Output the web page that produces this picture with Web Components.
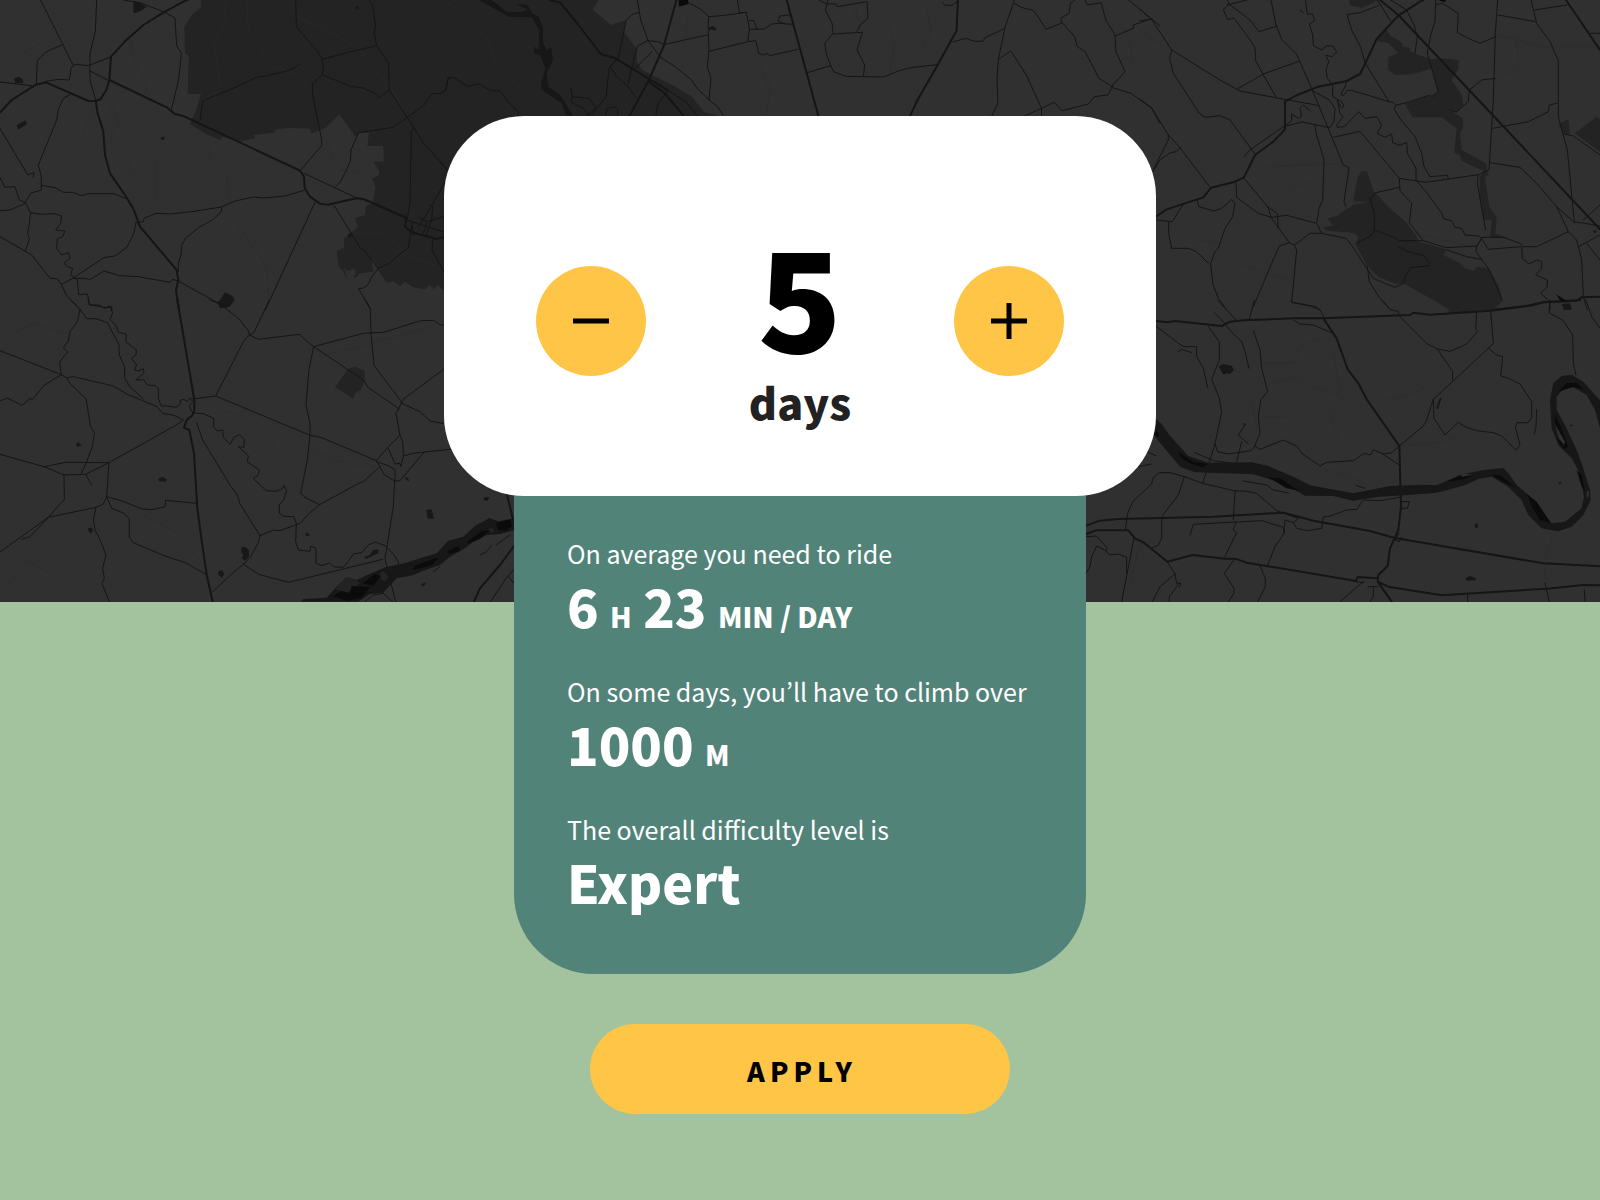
<!DOCTYPE html>
<html lang="en">
<head>
<meta charset="utf-8">
<meta name="viewport" content="width=device-width, initial-scale=1">
<title>Trip length</title>
<style>
  body {
    margin: 0;
    background: #a3c39e;
    font-family: "Noto Sans CJK KR", "Noto Sans", sans-serif;
  }
</style>
</head>
<body>
<trip-planner>
  <dark-map slot="map"></dark-map>
  <day-stepper value="5"></day-stepper>
  <trip-summary>
    <trip-stat label="On average you need to ride"><b>6</b> <small>H</small> <b>23</b> <small>MIN / DAY</small></trip-stat>
    <trip-stat label="On some days, you’ll have to climb over"><b>1000</b> <small>M</small></trip-stat>
    <trip-stat label="The overall difficulty level is"><b>Expert</b></trip-stat>
  </trip-summary>
  <apply-button>APPLY</apply-button>
</trip-planner>

<template id="map-template">
  <style>
    :host { display: block; height: 602px; overflow: hidden; background: #303030; }
    svg { display: block; width: 100%; height: 100%; }
    path { fill: none; stroke-linejoin: round; stroke-linecap: round; vector-effect: non-scaling-stroke; }
    .road { stroke: #151515; stroke-width: 1px; }
    .main { stroke: #151515; stroke-width: 2px; }
    .faint { stroke: #2c2c2c; stroke-width: 1px; opacity: .6; }
    .wood { fill: #232323; }
    .land { fill: #303030; }
    .lake { fill: #181818; }
    .deep { fill: #0b0b0b; }
    .river { fill: #171717; }
  </style>
  <svg viewBox="0 0 1600 602" preserveAspectRatio="xMidYMin slice" aria-hidden="true">
    <!-- north west -->
    <g transform="scale(.33333)">
      <path class="wood" d="M603 0V22L575 45 553 82 555 160 566 167 563 282H603L590 325 570 372 620 403 662 421 665 410 720 424 765 415 762 405 820 398 830 388 865 384 930 386 935 400 975 385 1018 343 1068 412 1075 398H1107L1102 438H1150L1152 485H1122L1138 515 1135 528 1115 535 1127 560 1118 610 1098 618 1095 645 1065 655 1074 680 1048 705 1032 715 1032 745 1010 752 1016 800 1028 812 1042 838 1032 803 1066 835 1080 820 1120 815 1114 780 1160 848 1180 843 1200 858 1215 845 1240 862 1275 868 1290 855 1300 868 1315 855 1325 868 1500 870 2154 600V348L2112 336 2076 290 2016 255 1926 210 1911 186 1908 144 1872 96 1878 60 1833 75 1779 30 1795 0Z"/>
      <path class="land" d="M1040 815L1062 805 1068 822 1055 832ZM1113 785L1120 780 1134 805 1127 808Z"/>
      <path class="faint" d="M385 105L400 160 440 270 460 310M330 310L355 370 330 420 380 470 410 540M470 475V600M630 440V480L680 520 685 600M690 640L730 700 800 800 805 900M970 410L1020 510 1080 520M670 0L680 60 640 130 660 250 640 300M740 0L745 90 780 140 820 200 880 220 960 300M890 50L1000 100 1080 150 1160 250 1220 340M1060 700L1150 700 1230 770 1300 795M250 400L280 330M40 180L120 130"/>
      <path class="road" d="M122 0L187 130 220 197 213 205 208 240 175 238 138 244M187 134L137 156 112 182 109 250M290 0L286 95 270 160V240L287 300M220 197L228 193 265 197 332 171M268 212L326 242M370 0L420 8 495 37 525 54 530 137 544 160 536 240 526 280 514 330M0 246L95 257M0 386L83 524 102 518 100 532M208 285L190 295 176 325 170 360 115 495 124 530V570L92 580 76 608M0 532L15 562 45 560 58 600 76 608 92 638 88 670 83 700 88 718 76 752M0 632L30 630 76 610M124 556L165 563 190 577 218 577 245 587 265 581 340 581 376 595M92 638L125 643 165 641 184 648 182 670 167 690 195 693 188 710 172 715 170 745 185 765 205 758 210 775 192 790 202 800 218 805 212 825 232 840 236 884 262 882 270 915 300 915 312 925 335 920 336 930M0 710L95 765 150 835 172 836 184 853 200 888 243 930M184 853L218 835 312 773 345 768 380 742 400 705 408 668M220 835L258 835 268 840 312 813 358 827 415 830 510 847 518 838 534 843M408 668L430 665 432 655 468 640 512 642 575 635 665 621 702 604 760 591 790 594 855 588 912 571M665 621L664 635 640 658 596 683 557 714 545 736 543 765 535 790V815M534 843L660 912M945 607L796 930M1002 616L1080 742 1100 760 1134 806 1112 835 1107 850 1092 864 1076 866 1112 930M1134 806L1168 790 1225 742 1235 680M600 360L608 303 720 256 772 231 800 228 870 210 899 193M887 0L889 80 957 160 967 180 970 208 965 225 937 252 938 285 965 420V437L902 510M967 178L1040 158 1130 137 1123 100 1126 75 1118 15 1108 0M1130 137L1166 190 1168 270 1240 380 1270 430 1345 510M968 225L1055 260 1090 264 1133 285 1134 296 1168 270M1345 235L1338 270 1320 281H1295L1270 318 1180 382 1076 398 1053 450 1051 485 1022 545 1007 560M1240 380L1234 395 1230 610 1222 655M912 520L1070 594M1345 530L1278 645 1255 680M1290 615L1298 620 1295 660 1278 705M1215 657L1235 665 1345 700M1235 665L1240 705M1345 645L1285 665M1298 715L1296 750 1345 840M1260 655L1282 665 1270 700"/>
      <path class="main" d="M0 338L35 300 108 254 138 247 265 303H288L302 297 320 268 328 240 333 170 375 124 430 75 490 38 550 5 563 0M328 240L500 322 524 342 553 349 900 512 912 530 914 565 930 590 960 611 984 614 1015 607 1070 595 1090 597 1220 654 1215 680 1235 697 1310 717 1345 708M288 308L293 340 310 395 315 465 330 520 375 585 400 626 420 680 530 810 535 840 528 870 537 930"/>
      <path class="lake" d="M400 2L412 5 441 20 422 33 401 40ZM42 236L56 230 68 238 70 250 46 250ZM50 375L77 361 81 373 54 389ZM653 910L675 877 698 888 704 901 688 920 660 925ZM482 412L492 410 494 417 485 421ZM1065 20L1076 18 1076 26 1068 28ZM1042 705L1052 697 1058 708 1046 713Z"/>
    </g>
    <!-- south west -->
    <g transform="translate(0 300) scale(.33333)">
      <path class="wood" d="M1005 262L1043 208 1065 200 1094 212V243L1082 270 1066 278 1060 296Z"/>
      <path class="faint" d="M0 120L100 70 200 100M320 180L420 300M650 320L760 370 860 480M960 170L1150 120 1290 80M900 430L1000 480 1100 500M20 860L80 780 150 820M420 640L520 690 600 780M1220 640L1300 720"/>
      <path class="road" d="M212 0L240 28 260 56H288L322 68 357 134 358 165 374 200V235L392 262 432 298M240 28L232 65 210 95 205 123 190 143 203 156 179 186 184 224M0 152L184 224 132 256 99 297 90 296 66 316 22 294 0 303M184 224L199 233 220 230 340 258 380 282 471 320 488 340 522 346 550 360 534 372 327 488 257 523 275 556M199 233L212 253 258 296 272 380 283 398 278 437 260 485 244 520M264 0L268 14 300 20 318 23 328 18 338 38 330 58 350 80 355 97 378 102V125L409 150 408 165 394 176 410 195 403 210 415 213 430 206 432 218 408 240 430 239 442 255 465 257 475 265V295L484 318 500 318 528 322 540 313 542 300 552 298 562 305 570 293 578 305 568 318 575 335 590 340 610 341 642 355 640 380 652 393 668 390 670 412 690 433 702 412 718 404 733 418 732 442 715 440 745 467 742 485 778 510 775 525 760 535 785 560 800 572 828 574 846 567 852 556 860 572 852 598 838 615V640L852 649 882 650 889 670 887 725 895 750 930 754 932 738 948 745V790L966 797 988 788 1000 800 1030 802 1048 780 1060 762 1085 758 1105 735 1125 726 1155 737 1180 762 1195 785V795M628 0L660 12 715 55 745 92 748 105 775 118 898 103 922 125 941 140 927 208 918 315 930 370V405L922 480 902 580 915 592 957 613M808 0L762 97 745 108 730 125 647 288 578 297M647 288L930 406 965 413 1129 482 1165 440 1200 406 1188 340 1195 325 1130 280 1105 263 1090 240 941 140 1090 100 1150 97 1262 62 1300 61 1320 74 1332 76M1097 0L1111 25 1113 100 1122 196 1205 306 1195 330M1332 207L1212 296 1205 310 1260 335 1290 363 1332 371M1200 406L1208 425 1210 468 1240 460 1273 456 1360 447M1273 456L1210 530 1200 542 1184 543 1153 524 1129 482M1165 445L1185 492 1200 490 1203 500 1210 468M1129 485L1165 497 1186 510 1180 620 1155 775 1165 820 1187 905M1140 500L1090 545 1078 549 957 615 928 640 900 670 840 692 820 690 780 707 775 728 752 770 730 793 700 817 638 875M730 793L776 823 865 847 1148 778M590 368L608 420 690 555 712 585 720 612 780 707M0 463L132 500 192 525 257 523M132 500L198 487 327 488 320 590 310 612 288 622 145 652 0 756M192 525L193 598 145 652 90 710 65 718M320 590L372 605 425 627 456 629 495 620 497 601 590 610M320 590L335 625 372 640 388 657V712L400 728 495 768 556 788 620 824M288 622L280 660 285 690 300 718 318 765 308 805 313 835 306 850 320 885 328 905M1542 808L1520 832 1472 905M1525 830L1542 850M1440 765L1460 755 1475 735M1488 735L1530 705"/>
      <path class="main" d="M532 0L583 300V330L578 345 560 360 552 383 568 390 582 460 592 625 604 715 620 824 638 905M1521 583L1538 655M1542 738L1500 795 1440 865 1422 905"/>
      <path class="river" d="M903 905L910 897 980 893 1010 860 1040 832 1070 840 1100 826 1160 800 1215 790 1250 778 1310 760 1345 722 1390 710 1425 678 1468 654 1495 664 1542 655V690L1500 702 1460 705 1420 725 1395 745 1350 770 1320 795 1270 812 1240 825 1190 835 1150 878 1110 882 1075 905Z"/>
      <path class="wood" d="M1005 868L1038 833 1068 840 1080 850 1040 880ZM1140 822L1150 812 1166 830 1155 846 1142 837ZM1466 686L1478 682 1484 696 1472 698Z"/>
      <path class="deep" d="M1000 888L1025 872 1050 880 1055 858 1110 862 1085 893 1040 903ZM1088 850L1125 822 1142 828 1120 858ZM1245 797L1315 772 1295 796 1240 810ZM1405 722L1445 694 1468 692 1440 716 1402 732ZM1488 670L1532 658 1535 680 1518 692 1494 690ZM1340 755L1375 738 1380 752 1350 762Z"/>
      <path class="lake" d="M1279 630L1295 628 1302 656 1283 656ZM1452 592L1469 590 1463 602 1451 601ZM724 742L735 740 747 750V770L735 782 725 775 730 765 723 755ZM655 815L665 810 673 822 665 833 655 825ZM262 687L272 682 280 690 272 701ZM228 432L236 427 245 438 230 440ZM475 536L485 531 500 537 498 545 477 544ZM915 703L923 697 930 707 918 708ZM1090 772L1110 765 1120 750 1136 748 1135 760 1100 776ZM1213 532L1220 532 1228 541 1224 544ZM1265 852L1278 846 1276 854 1266 860ZM652 5L668 0 698 2 680 24Z"/>
      <path class="road" d="M1095 905L1120 885 1150 880 1178 905M1300 815L1320 800"/>
    </g>
    <!-- north, above the card -->
    <g transform="translate(440 0) scale(.45918 .33333)">
      <path class="road" d="M430 0L437 60 453 122 473 125 490 133 585 104M545 10L570 30 585 50 584 90 586 150 582 200 590 235 586 300 560 265 548 240 510 198 480 172 453 122 430 138 422 180 410 248M648 0L652 38 667 37 674 88 670 125 586 154M585 50L620 46 667 37M674 62L684 62 690 88 706 87 722 72 740 70 768 73M763 44L740 48 736 62 750 72M674 88L690 88M670 125L688 122 694 160 705 165 712 160 718 167 780 148M800 218L850 197 858 216 885 229 966 231 1000 212 1030 202 1084 194M845 0L839 30 854 70 856 100 838 130 842 165 852 200M825 0L842 12 862 12 865 20 930 5 932 55 915 75 908 95M856 102L920 97 908 150 925 195 922 228M1095 8L1100 16 1115 16 1128 3M1251 0L1230 85 1216 178 1213 240 1215 310 1202 347M1117 126L1145 115 1165 124 1182 124 1187 113 1230 85M1251 10L1265 22 1290 30 1300 45 1320 88 1355 68 1352 55 1370 40 1373 10 1383 0M1355 68L1382 110 1388 140 1405 155 1435 235 1462 258M1405 0L1410 15 1440 8 1450 60 1470 105 1472 155 1492 215 1465 255 1462 265 1455 285 1425 290 1412 312 1355 332 1338 307 1275 347M1470 108L1510 85V75L1545 58M1216 178L1230 165 1243 153 1277 225 1310 325V347M1462 262L1505 280 1550 325 1568 370M405 65L388 175 368 205 362 290 330 347M388 175L370 200 385 230 410 260 425 290M432 38L420 42 405 62M18 232L30 233 60 258 85 252 110 272H130L148 305 170 335V347M18 232L12 270 0 280M285 265L288 290 325 295 340 325 320 345M288 290L285 305 312 325 325 347M360 347L365 325 380 320 388 330 386 347M495 275L475 310 470 347M495 270L535 305 560 347M586 300L605 320 617 347M425 205L462 155M1568 480L1552 515M0 485L14 510"/>
      <path class="main" d="M515 0L488 135 455 240 413 347M755 0L824 347M1128 0L1125 92 1084 194 1040 300 1024 347M238 0L262 8 300 72 350 162 382 175 495 270M455 245L490 280 530 347"/>
      <path class="road" d="M1500 0L1568 78"/>
      <path class="river" d="M85 0L112 0 145 35 180 36 190 28 165 12 190 14 202 42 215 50 224 80 225 130 233 150 242 142 246 180 232 220 236 260 262 285 290 347H275L265 310 220 268 222 240 230 205 218 165 205 160V140L215 150 216 90 200 52 150 50Z"/>
      <path class="faint" d="M10 0L60 50 100 110 130 210 200 290M0 190L20 230M540 50L530 150M690 180L720 270 710 340M970 60L990 130 980 220M900 0L910 60M1060 20L1070 90 1050 150M1500 120L1510 200 1550 260"/>
      <path class="deep" d="M520 0H540L542 12 520 20Z"/>
      <path class="lake" d="M585 82L595 78 603 88 598 92 592 88 586 92Z"/>
    </g>
    <!-- north east -->
    <g transform="translate(1140 0) scale(.33333)">
      <path class="wood" d="M627 0H712L700 8 665 24 630 16ZM708 122L735 85 752 108 782 125 790 140 808 143 812 155 870 178 910 175 955 180V208L935 240 965 285 970 318 948 336 925 320H890L875 300 878 288 895 278 876 205 820 222 765 225 745 210V172L775 160 745 130ZM795 312L845 295 875 285 880 312 930 322 945 340 968 355 970 380 960 400 965 450 992 465 1038 490 1045 525 1035 530 1040 570 1048 620 1070 652 1066 700 1105 715 1050 712 1055 660H1030L1018 590 1020 530 1030 512 965 482 960 465 943 458 950 385 905 352H818ZM640 604L652 535 665 512 682 516 700 572 712 585 745 620 800 668 832 712 835 725 920 748 910 765 960 790 975 805 1000 812 1010 800 1045 805 1075 855 1087 900 1075 912 1060 930H930L880 900 790 850 770 852 715 830 680 795 648 735 655 710 640 698 560 692 548 682 580 678 562 655 590 648 640 615 688 606ZM1255 372L1285 358 1290 402H1272ZM1305 400L1370 350 1380 358V455L1320 412Z"/>
      <path class="faint" d="M0 90L60 130M180 720L250 730 300 790 380 820 450 840M380 500L600 490M400 530L450 570 520 540M1130 110L1135 210 1090 220M1060 100L1200 140 1380 140M820 700L1000 740M140 320L200 350"/>
      <path class="road" d="M0 28L36 60 95 150 240 240 300 273 412 294 538 317M0 62L36 57M95 150L89 175 99 218 178 340 195 352 240 347 270 360 347 465M262 0L268 13 250 28 262 58 282 55 322 108 345 142 347 182 370 225 410 294M262 15L320 0M268 13L330 60 357 95 412 78M393 0L408 75 425 118 470 163 517 270 610 495 627 503 612 605 618 620M477 184L372 221 322 250 293 266M0 297L36 325 85 405 120 443 207 558M85 405V420L62 465 40 510M120 443L108 455 92 458 62 478M497 0L500 30 502 42 518 42 524 62 508 72 518 105 520 137 545 150 560 137 578 138 590 155 577 170 558 166 566 185 558 210 562 235 578 255V290L605 305 612 318 605 325 592 300 600 340 610 350 590 375 592 382 612 380 640 352 656 335 675 355 710 350 725 375 712 400 735 412 755 402 758 428 780 436 800 427 802 460 828 505V540L862 580 905 640 912 657 935 662 945 682 965 685 975 705 1015 708 1025 715M480 30L490 38M715 17L660 38 621 44 635 90 662 142 676 190 747 305 760 307 767 316M747 305L635 271H622L610 287 603 283 618 255 617 242M767 316L763 328 783 360 825 410 845 460 852 500 870 530 922 526 925 535M767 316L800 308 870 285M517 272L568 300 585 325 582 365 568 383M580 412L660 394 778 535 857 547 1015 524 1047 510 1060 300 1066 100 1073 0M778 535L780 572 815 610 808 668 850 722 918 743 1010 738 1028 712M778 562L708 578 690 595 703 640V690L690 710 648 730M703 690L770 715 775 722 850 722M775 740L800 753 850 767 870 790M870 797L812 803 795 830 790 850 765 862 735 850 700 835 638 740 618 715 545 700 530 670 440 646 395 652 355 640 290 592 288 548M545 700H510L463 735 448 728 418 738 395 790 340 920M448 728L395 655 383 620 312 535M463 735L470 750 455 907 530 920 540 930M525 375L528 398 552 480 548 600 537 625 530 670M487 366L568 383M487 366L430 380 330 450 312 470M438 375L455 362 455 342 475 355 485 350 480 325 490 315 510 332M172 600L176 620 222 633 245 625 275 598 285 612 278 650 255 685 235 745 225 755 212 790 218 850 235 895 260 930M50 660L97 665 130 612M86 668V700L95 745 145 745 170 755 205 790M682 800L688 845 720 895 752 930M1075 45L1185 65M1173 0L1190 70 1230 125 1255 182V350L1282 450 1303 668M1185 30L1280 15M1350 100H1380M887 0L885 65 872 105 862 160M887 14L908 10 955 40 952 98 985 115 1020 130 1068 110M800 30L822 75 832 110 825 160M752 0L800 30M712 0L755 68M862 160L895 275 875 290M930 330L950 336 985 305 988 270 1025 240 1066 235M1058 385L1165 365 1225 335 1228 315 1250 310M1050 488L1140 502 1190 550 1250 620 1285 695 1190 740H1150L1140 730 1090 712 1028 712 1010 738 1008 755 1045 805 1087 900M1015 524L1012 550 1037 690M1028 720L1045 748 1145 740 1147 775 1167 792 1190 780 1205 785V805L1187 825 1222 840V860L1202 880 1230 905V930M1250 620L1300 665 1335 670 1380 678M1330 660L1380 615M1285 695L1310 720 1325 780 1330 890 1342 930M1380 705L1315 740M1340 730L1380 780M920 750L980 770 1025 778M1272 402L1300 408 1380 465M382 620L412 640 415 685"/>
      <path class="main" d="M48 650L80 628 190 592 213 563 285 545 312 532 345 465 400 425 435 388V305L465 288 535 260 620 243 660 222 676 190 710 117 775 47 840 5 850 0M720 0L775 45 1058 345 1380 688M1278 0L1380 150M1060 930L1160 918 1210 907 1310 902 1325 892 1380 890"/>
      <path class="deep" d="M1248 882L1275 900 1262 904ZM898 0H918L915 6 900 3Z"/>
      <path class="lake" d="M1265 912H1290L1294 930H1272ZM1358 693L1366 690 1371 697 1362 699Z"/>
    </g>
    <!-- south east -->
    <g transform="translate(1080 300) scale(.33333)">
      <path class="wood" d="M1075 0H1268L1250 22 1235 30 1200 25 1190 38H1105L1108 18Z"/>
      <path class="faint" d="M550 190L640 190 660 140 710 118 760 150 780 280M570 250L640 230 700 260 790 290 750 350 780 430M920 300L1000 280 1065 240M940 440L1060 430 1140 410M510 290L530 380M740 510L860 550M190 700L150 850M540 350L620 350M1395 690L1418 715 1395 770V850"/>
      <path class="road" d="M228 78L295 130 312 140H350V170L370 205 383 262M293 155L305 148 335 158M385 80L418 125V180L395 238 418 295 425 335 405 432 368 550M402 38L430 65 458 100 485 125 495 155 507 205M413 0L468 60M523 0L508 58M520 92L540 150 545 205 563 275 543 298 535 350 540 400 523 440 513 452 445 462 413 455 405 432M490 372H497L475 405 505 432M485 425L470 485M640 60L660 72 700 75 755 98M633 0L640 8 690 18 720 30 735 58M905 0L930 28 955 35 958 48 1042 132 1072 147 1110 154 1160 132 1192 95 1187 85 1190 38M1232 32L1240 130 1225 145 1060 298 1040 360 1030 378 958 438 935 458 912 462 880 450 872 465 853 460 820 482 740 487 720 498 665 460 652 440 610 420 540 448 525 438M1072 147L1118 215V240M1060 298L1062 355 1095 405 1135 367 1155 380 1190 392 1240 398 1265 408 1308 450 1320 435 1306 380 1312 368H1345L1355 352V305L1320 252 1285 235 1262 228 1268 170 1250 165 1225 145M958 495L905 460M343 457L400 482 460 490M1410 0L1407 38 1450 62 1478 105 1480 190 1488 225M1518 0L1535 50 1560 85M313 530L270 518H238L218 535 215 552 158 605 143 640 136 690M313 530L295 585 245 650V715L235 735 215 745M313 530L368 550 465 573H495L530 580 590 632M465 573L460 660M330 705L340 673 545 662 610 682 612 700 585 740 562 798M468 665L460 690 470 698 435 770M463 778L433 820 462 865V880L445 905M540 798L556 835V860L533 905M590 632L655 655 640 668 615 660 612 700M640 668L650 685 685 692 725 685 730 650 745 650 800 630 830 628 850 600 900 602 958 592M965 605H988L982 625H965M958 700L945 720 958 725 965 712M162 715L125 905M262 785L285 822 290 850 303 850 297 862M285 822L240 860 217 905M297 850L268 890V905M850 845L820 870 780 905M828 845L850 848M880 860V890L870 905M865 860H892M1163 885V905M1395 850L1408 905M1513 870L1515 905M18 710L50 708 82 745 78 752 50 738 35 770 30 800 18 820M78 752L88 765 115 762 140 772V820M828 556L855 565M205 458L228 467M175 500L215 492M1370 328L1368 380 1363 402"/>
      <path class="main" d="M228 63L265 67 285 63 425 78 450 65 490 61 640 55 730 55 990 45 1000 38 1050 44 1230 32 1350 17 1390 7 1500 0M730 55L770 115 803 208 835 250 860 298 958 438 963 620 955 690 930 745 923 798 895 825 893 845 935 905M893 845L925 860 1085 886 1400 866 1510 855 1560 856M18 677L60 662 115 657 400 650 610 638 700 662 870 693 945 714 1390 790 1560 799M18 702L48 691H145L165 715 190 727 262 785 338 765 435 776H465L500 788 828 843 833 831 893 835"/>
      <path class="river" d="M215 370L228 357 245 372 268 405 325 468 385 488 515 487 565 498 640 530 690 556 820 580 930 558 1030 554 1070 556 1140 525 1210 510 1270 504 1285 520 1310 555 1345 585 1380 630 1415 670 1455 665 1505 625 1512 590 1500 520 1475 475 1435 435 1415 385 1410 300 1420 250 1445 228 1475 224 1510 245 1550 290 1560 300V385L1545 330 1520 285 1480 262 1450 266 1430 290V330L1455 375 1490 450 1505 490 1530 570 1532 600 1510 645 1475 680 1435 694 1385 685 1345 645 1325 600 1285 560 1235 530 1195 537 1150 557 1070 578 985 585 895 590 820 602 760 588 675 587 610 550 520 523 345 517 300 500 225 410Z"/>
      <path class="deep" d="M220 390L238 400 235 412 222 404ZM295 455L340 485 383 492 370 502 335 492 305 475ZM565 532L600 535 655 572 620 565ZM1100 545L1145 525 1175 530 1140 540ZM1235 525L1260 525 1305 562 1275 548ZM1342 583L1370 605 1412 668 1380 660 1355 620ZM1435 275L1460 250 1490 248 1510 268 1480 260ZM1425 345L1440 375 1465 440 1450 448 1430 415 1445 425 1425 375ZM1490 510L1505 525 1515 575 1505 560ZM418 200L440 195 448 218 430 222ZM1440 0H1460V5Z"/>
      <path class="land" d="M1425 372L1455 425 1452 436 1435 412ZM1140 528L1150 522 1175 523 1150 530ZM1520 575L1527 570 1526 590 1520 595Z"/>
      <path class="lake" d="M418 197L430 192 455 197 462 210 450 222 425 215ZM1447 12L1470 10 1475 28 1450 26ZM1068 325L1080 293 1085 294 1074 328ZM1184 672L1193 670 1195 683 1185 683ZM1157 834L1170 828 1187 834V841L1160 842ZM1435 547L1445 544 1440 555ZM1468 377L1478 372 1475 380Z"/>
      <path class="road" d="M490 543L560 555 580 570 625 579"/>
    </g>
  </svg>
</template>

<script>
  class TripPlanner extends HTMLElement {
    constructor() {
      super();
      this.attachShadow({ mode: 'open' });
    }

    connectedCallback() {
      this.shadowRoot.innerHTML = `
        <style>
          :host { display: grid; }
          slot[name="map"], main { grid-area: 1 / 1; }
          ::slotted([slot="map"]) { grid-area: 1 / 1; align-self: start; }
          main {
            position: relative;
            display: flex;
            flex-direction: column;
            align-items: center;
            padding: 116px 16px 84px;
          }
        </style>
        <slot name="map"></slot>
        <main><slot></slot></main>
      `;
    }
  }

  class DarkMap extends HTMLElement {
    constructor() {
      super();
      const template = document.getElementById('map-template');
      this.attachShadow({ mode: 'open' }).append(template.content.cloneNode(true));
    }
  }

  class DayStepper extends HTMLElement {
    constructor() {
      super();
      this.attachShadow({ mode: 'open' });
    }

    connectedCallback() {
      this.render();
      this.setupEventListeners();
    }

    render() {
      this.shadowRoot.innerHTML = `
        <style>
          :host {
            box-sizing: border-box;
            display: flex;
            justify-content: space-between;
            align-items: center;
            width: 100%;
            max-width: 712px;
            min-height: 380px;
            padding: 30px 92px 0;
            border-radius: 80px;
            background: #fff;
          }
          button {
            display: grid;
            place-items: center;
            width: 110px;
            height: 110px;
            margin: 0;
            padding: 0;
            border: 0;
            border-radius: 50%;
            background: #ffc547;
            color: #000;
            cursor: pointer;
          }
          svg { width: 36px; height: 36px; stroke: currentColor; stroke-width: 5; }
          output {
            display: flex;
            flex-direction: column;
            align-items: center;
            gap: 12px;
            padding-top: 12px;
            font-weight: 900;
          }
          .count { font-size: 138px; line-height: 136px; color: #000; }
          .unit { font-size: 43px; line-height: 56px; color: #222; }
        </style>
        <button type="button" class="minus" aria-label="Fewer days">
          <svg viewBox="0 0 36 36"><path d="M0 18H36"/></svg>
        </button>
        <output><span class="count">${this.getAttribute('value')}</span><span class="unit">days</span></output>
        <button type="button" class="plus" aria-label="More days">
          <svg viewBox="0 0 36 36"><path d="M0 18H36M18 0V36"/></svg>
        </button>
      `;
    }

    setupEventListeners() {
      this.shadowRoot.querySelector('.minus').addEventListener('click', () => this.step(-1));
      this.shadowRoot.querySelector('.plus').addEventListener('click', () => this.step(1));
    }

    step(amount) {
      const value = Math.max(1, Number(this.getAttribute('value')) + amount);
      this.setAttribute('value', value);
      this.shadowRoot.querySelector('.count').textContent = value;
    }
  }

  class TripSummary extends HTMLElement {
    constructor() {
      super();
      this.attachShadow({ mode: 'open' });
    }

    connectedCallback() {
      this.shadowRoot.innerHTML = `
        <style>
          :host {
            box-sizing: border-box;
            display: flex;
            flex-direction: column;
            gap: 20px;
            width: 90%;
            max-width: 572px;
            padding: 38px 32px 46px 53px;
            border-radius: 0 0 80px 80px;
            background: #528379;
            color: #fff;
          }
        </style>
        <slot></slot>
      `;
    }
  }

  class TripStat extends HTMLElement {
    constructor() {
      super();
      this.attachShadow({ mode: 'open' });
    }

    connectedCallback() {
      this.shadowRoot.innerHTML = `
        <style>
          :host { display: flex; flex-direction: column; gap: 8px; }
          p { margin: 0; }
          .label { font-size: 25px; line-height: 38px; font-weight: 400; }
          .value { font-size: 28px; line-height: 72px; font-weight: 900; }
          ::slotted(b) { font-size: 52px; line-height: 1; }
          ::slotted(small) { font-size: 28px; margin: 0 5px; }
        </style>
        <p class="label">${this.getAttribute('label')}</p>
        <p class="value"><slot></slot></p>
      `;
    }
  }

  class ApplyButton extends HTMLElement {
    constructor() {
      super();
      this.attachShadow({ mode: 'open' });
    }

    connectedCallback() {
      this.shadowRoot.innerHTML = `
        <style>
          :host { display: block; width: 100%; max-width: 420px; margin-top: 50px; }
          button {
            width: 100%;
            height: 90px;
            padding: 4px 0 0 4px;
            border: 0;
            border-radius: 45px;
            background: #ffc547;
            color: #000;
            font-family: inherit;
            font-size: 27px;
            font-weight: 900;
            line-height: 36px;
            letter-spacing: 5px;
            cursor: pointer;
          }
        </style>
        <button type="button"><slot></slot></button>
      `;
    }
  }

  customElements.define('trip-planner', TripPlanner);
  customElements.define('dark-map', DarkMap);
  customElements.define('day-stepper', DayStepper);
  customElements.define('trip-summary', TripSummary);
  customElements.define('trip-stat', TripStat);
  customElements.define('apply-button', ApplyButton);
</script>
</body>
</html>
